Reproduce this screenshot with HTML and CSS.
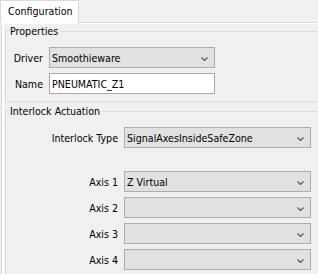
FILE: index.html
```html
<!DOCTYPE html>
<html lang="en">
<head>
    <meta charset="UTF-8">
    <title>Configuration</title>
    <link rel="stylesheet" href="styles.css">
</head>
<body>

    <!-- Tab strip -->
    <div class="tabs">
        <div class="tab">Configuration</div>
        <div class="tab-rest"></div>
    </div>

    <div class="page">
        <!-- Properties -->
        <fieldset class="group">
            <legend>Properties</legend>
            <div class="form form-props">
                <label>Driver</label>
                <div class="combo">
                    <span>Smoothieware</span>
                    <svg class="chevron" width="7" height="4" viewBox="0 0 7 4"><path d="M0.5 0.5 L3.5 3.5 L6.5 0.5" /></svg>
                </div>
                <label>Name</label>
                <div class="textbox">PNEUMATIC_Z1</div>
            </div>
        </fieldset>

        <!-- Interlock Actuation -->
        <fieldset class="group group-interlock">
            <legend>Interlock Actuation</legend>
            <div class="form form-interlock">
                <label>Interlock Type</label>
                <div class="combo">
                    <span>SignalAxesInsideSafeZone</span>
                    <svg class="chevron" width="7" height="4" viewBox="0 0 7 4"><path d="M0.5 0.5 L3.5 3.5 L6.5 0.5" /></svg>
                </div>

                <label class="first-axis">Axis 1</label>
                <div class="combo first-axis">
                    <span>Z Virtual</span>
                    <svg class="chevron" width="7" height="4" viewBox="0 0 7 4"><path d="M0.5 0.5 L3.5 3.5 L6.5 0.5" /></svg>
                </div>
                <label>Axis 2</label>
                <div class="combo">
                    <span></span>
                    <svg class="chevron" width="7" height="4" viewBox="0 0 7 4"><path d="M0.5 0.5 L3.5 3.5 L6.5 0.5" /></svg>
                </div>
                <label>Axis 3</label>
                <div class="combo">
                    <span></span>
                    <svg class="chevron" width="7" height="4" viewBox="0 0 7 4"><path d="M0.5 0.5 L3.5 3.5 L6.5 0.5" /></svg>
                </div>
                <label>Axis 4</label>
                <div class="combo">
                    <span></span>
                    <svg class="chevron" width="7" height="4" viewBox="0 0 7 4"><path d="M0.5 0.5 L3.5 3.5 L6.5 0.5" /></svg>
                </div>
            </div>
        </fieldset>
    </div>

</body>
</html>
```

FILE: styles.css
```css
/* General */
body {
    margin: 0;
    width: 318px;
    height: 274px;
    overflow: hidden;
    background: #f0f0f0;
    font-family: "DejaVu Sans Condensed", "DejaVu Sans", "Liberation Sans", sans-serif;
    font-stretch: semi-condensed;
    font-size: 10.6px;
    color: #000;
}

/* Tab strip */
.tabs {
    display: flex;
    height: 23px;
}

.tab {
    box-sizing: border-box;
    width: 79px;
    height: 23px;
    padding: 4px 0 0 7px;
    background: #fff;
    border: 1px solid #d9d9d9;
    border-bottom: none;
}

.tab-rest {
    flex: 1;
    border-bottom: 1px solid #d9d9d9;
}

/* Tab page */
.page {
    box-sizing: border-box;
    display: flex;
    flex-direction: column;
    margin-left: 1px;
    height: 251px;
    border-left: 1px solid #d9d9d9;
    box-shadow: inset 2px 1px 0 #fff;
    padding-top: 1px;
}

/* Group boxes */
.group {
    margin: 0 0 0 3px;
    padding: 9px 4px 7px 4px;
    border: 1px solid #dcdcdc;
    border-right: none;
    min-width: 0;
}

.group legend {
    padding: 0 2px;
    margin-left: -2px;
    line-height: 14px;
}

.group-interlock {
    flex: 1;
    margin-top: 2px;
    padding-bottom: 0;
    border-bottom: none;
}

/* Form grids */
.form {
    display: grid;
    column-gap: 6px;
    row-gap: 5px;
    align-items: center;
}

.form-props {
    grid-template-columns: 33px 166px;
}

.form-interlock {
    grid-template-columns: 108px 187px;
}

.form label {
    text-align: right;
    white-space: nowrap;
}

.form .first-axis {
    margin-top: 18px;
}

/* Inputs */
.combo,
.textbox {
    box-sizing: border-box;
    height: 21px;
    border: 1px solid #adadad;
    display: flex;
    align-items: center;
    padding: 0 0 0 2px;
    white-space: nowrap;
}

.combo {
    background: #e1e1e1;
    justify-content: space-between;
    padding-right: 6px;
}

.textbox {
    background: #fff;
    border-color: #a8a8a8;
}

.chevron {
    margin-top: 2px;
}

.chevron path {
    fill: none;
    stroke: #555;
    stroke-width: 1.1;
}
```
